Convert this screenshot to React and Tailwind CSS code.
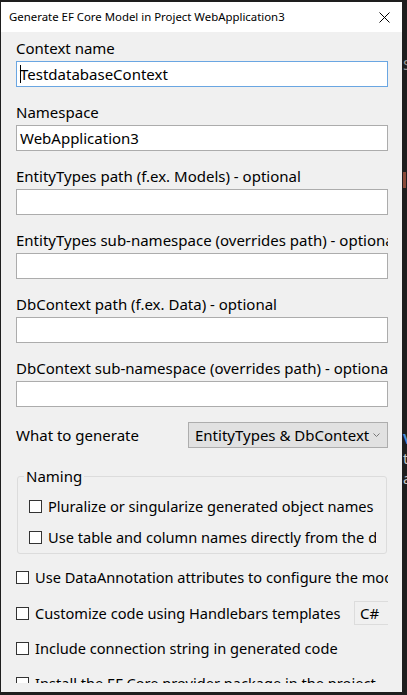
const font = { fontFamily: '"Segoe UI", "Noto Sans", sans-serif' };

function Field({ label, value, focused }) {
  return (
    <div className="flex flex-col w-[372px]">
      <div className="h-[20px] leading-[20px] text-[15px] text-black whitespace-nowrap overflow-hidden">
        {label}
      </div>
      <div
        className={
          'mt-[3px] h-[26px] bg-white border flex items-center pl-[3px] text-[15px] text-black ' +
          (focused ? 'border-[#6aa6e2]' : 'border-[#acacac]')
        }
      >
        {focused && <span className="w-px h-[18px] bg-black mr-[-1px]" />}
        <span>{value}</span>
      </div>
    </div>
  );
}

function Check({ label, width }) {
  return (
    <div className="flex items-center h-[20px] overflow-hidden whitespace-nowrap" style={{ width }}>
      <span className="shrink-0 w-[13px] h-[13px] border border-[#333333] bg-white" />
      <span className="ml-[6px] text-[14.6px] leading-[20px] text-black">{label}</span>
    </div>
  );
}

export default function App() {
  return (
    <div className="w-[407px] h-[695px] bg-[#1e1e1e] flex overflow-hidden" style={font}>
      <div className="ml-px mt-[2px] w-[401px] h-[690px] bg-[#f0f0f0] flex flex-col shrink-0">
        {/* title bar */}
        <div className="h-[30px] bg-white flex items-center justify-between pl-[8px] pr-[8px]">
          <span className="text-[11.4px] text-black">Generate EF Core Model in Project WebApplication3</span>
          <svg width="11" height="11" viewBox="0 0 11 11" className="mr-[4px]">
            <path d="M0.5 0.5 L10.5 10.5 M10.5 0.5 L0.5 10.5" stroke="#000" strokeWidth="1" />
          </svg>
        </div>

        <div className="h-[651px] overflow-hidden pl-[15px] pt-[6px] flex flex-col">
          <div className="flex flex-col gap-[15px]">
            <Field label="Context name" value="TestdatabaseContext" focused />
            <Field label="Namespace" value="WebApplication3" />
            <Field label="EntityTypes path (f.ex. Models) - optional" />
            <Field label="EntityTypes sub-namespace (overrides path) - optional" />
            <Field label="DbContext path (f.ex. Data) - optional" />
            <Field label="DbContext sub-namespace (overrides path) - optional" />
          </div>

          <div className="mt-[15px] w-[372px] h-[26px] flex items-center justify-between">
            <span className="text-[15px] text-black">What to generate</span>
            <div className="w-[200px] h-[26px] bg-[#e1e1e1] border border-[#adadad] flex items-center justify-between pl-[6px] pr-[7px]">
              <span className="text-[15px] text-black">EntityTypes &amp; DbContext</span>
              <svg width="7" height="4" viewBox="0 0 7 4">
                <path d="M0.5 0.5 L3.5 3.5 L6.5 0.5" stroke="#777" strokeWidth="1" fill="none" />
              </svg>
            </div>
          </div>

          <fieldset className="mt-[18px] ml-px w-[370px] border border-[#dcdcdc] rounded-[3px] pb-[6px]">
            <legend className="ml-[6px] px-[2px] text-[15px] leading-[20px] text-black">Naming</legend>
            <div className="mt-[10px] pl-[11px] flex flex-col gap-[11px]">
              <Check label="Pluralize or singularize generated object names" width={347} />
              <Check label="Use table and column names directly from the database" width={347} />
            </div>
          </fieldset>

          <div className="mt-[13px] flex flex-col">
            <Check label="Use DataAnnotation attributes to configure the model" width={372} />
            <div className="mt-[14px] h-[24px] w-[372px] flex items-center justify-between">
              <Check label="Customize code using Handlebars templates" width={330} />
              <div className="w-[34px] h-[24px] border border-[#dcdcdc] border-r-0 bg-[#f0f0f0] flex items-center pl-[5px] text-[15px] text-black">
                C#
              </div>
            </div>
            <div className="mt-[13px]">
              <Check label="Include connection string in generated code" width={372} />
            </div>
            <div className="mt-[15px]">
              <Check label="Install the EF Core provider package in the project" width={372} />
            </div>
          </div>
        </div>
      </div>

      <div className="flex-1 flex flex-col overflow-hidden text-[15px] leading-[20px] pl-[1px]">
        <span className="mt-[54px] text-[#9a9a9a]">S</span>
        <span className="mt-[98px] h-[16px] w-[3px] bg-[#8a4a3a]" />
        <span className="mt-[240px] text-[#4a90d9] font-bold">V</span>
        <span className="text-[#c8c8c8]">t</span>
        <span className="text-[#c8c8c8]">a</span>
      </div>
    </div>
  );
}
